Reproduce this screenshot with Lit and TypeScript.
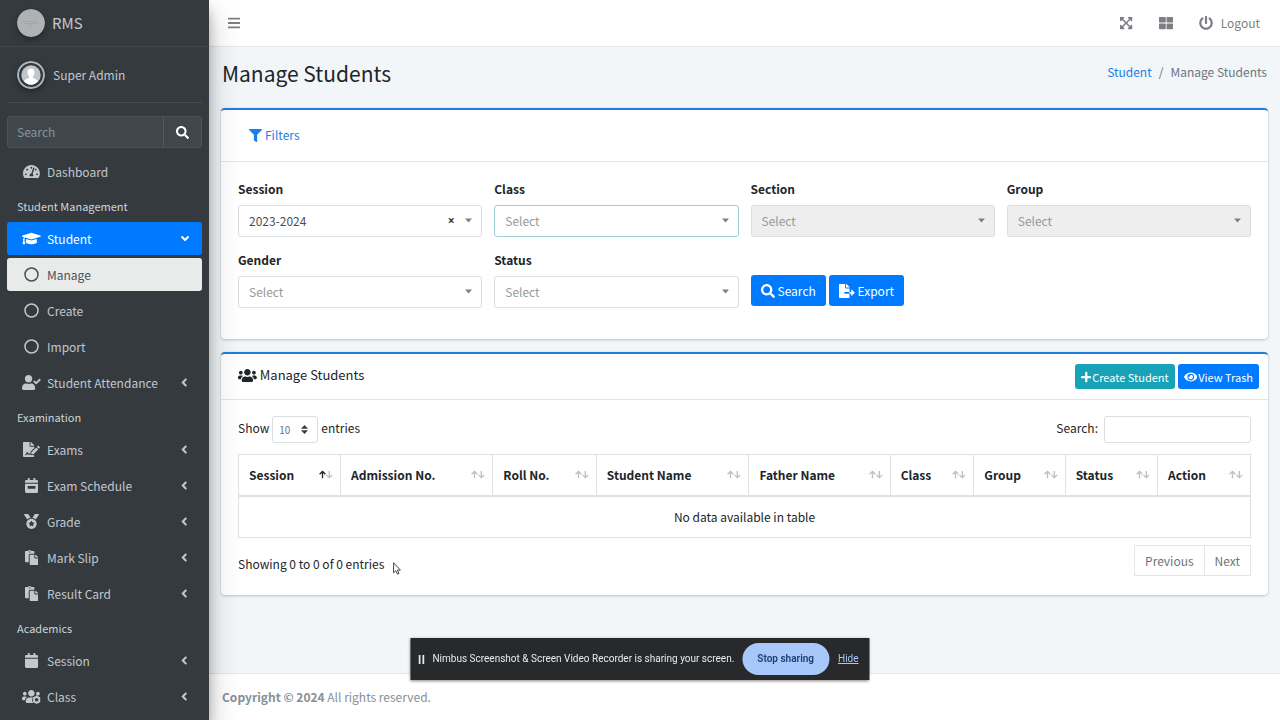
import { LitElement, html, css, svg, nothing } from "lit";
import { customElement, property } from "lit/decorators.js";

interface Glyph {
  w: number;
  body: unknown;
}

const path = (w: number, d: string): Glyph => ({ w, body: svg`<path fill="currentColor" fill-rule="evenodd" d=${d}></path>` });

const CALENDAR =
  "M12 192h424c6.6 0 12 5.4 12 12v260c0 26.5-21.5 48-48 48H48c-26.5 0-48-21.5-48-48V204c0-6.6 5.4-12 12-12zm436-44v-36c0-26.5-21.5-48-48-48h-48V12c0-6.6-5.4-12-12-12h-40c-6.6 0-12 5.4-12 12v52H160V12c0-6.6-5.4-12-12-12h-40c-6.6 0-12 5.4-12 12v52H48C21.5 64 0 85.5 0 112v36c0 6.6 5.4 12 12 12h424c6.6 0 12-5.4 12-12z";

const GLYPHS: Record<string, Glyph> = {
  search: path(512, "M505 442.7L405.3 343c-4.5-4.5-10.6-7-17-7H372c27.6-35.3 44-79.7 44-128C416 93.1 322.9 0 208 0S0 93.1 0 208s93.1 208 208 208c48.3 0 92.7-16.4 128-44v16.3c0 6.4 2.5 12.5 7 17l99.7 99.7c9.4 9.4 24.6 9.4 33.9 0l28.3-28.3c9.4-9.4 9.4-24.6.1-34zM208 336c-70.7 0-128-57.2-128-128 0-70.7 57.2-128 128-128 70.7 0 128 57.2 128 128 0 70.7-57.2 128-128 128z"),
  gauge: path(576, "M288 32C128.94 32 0 160.94 0 320c0 52.8 14.25 102.26 39.06 144.8 5.61 9.62 16.3 15.2 27.44 15.2h443c11.14 0 21.83-5.58 27.44-15.2C561.75 422.26 576 372.8 576 320c0-159.06-128.94-288-288-288zm0 64c14.71 0 26.58 10.13 30.32 23.65-1.11 2.26-2.64 4.23-3.45 6.67l-9.22 27.67c-5.13 3.49-10.97 6.01-17.64 6.01-17.67 0-32-14.33-32-32S270.33 96 288 96zM96 384c-17.67 0-32-14.33-32-32s14.33-32 32-32 32 14.33 32 32-14.33 32-32 32zm48-160c-17.67 0-32-14.33-32-32s14.33-32 32-32 32 14.33 32 32-14.33 32-32 32zm246.77-72.41l-61.33 184C343.13 347.33 352 364.54 352 384c0 11.72-3.38 22.55-8.88 32H232.88c-5.5-9.45-8.88-20.28-8.88-32 0-33.94 26.5-61.43 59.9-63.59l61.34-184.01c4.17-12.56 17.73-19.45 30.36-15.17 12.57 4.19 19.35 17.79 15.17 30.36zm14.66 57.2l15.52-46.55c3.47-1.29 7.13-2.23 11.05-2.23 17.67 0 32 14.33 32 32s-14.33 32-32 32c-11.38-.01-20.89-6.28-26.57-15.22zM480 384c-17.67 0-32-14.33-32-32s14.33-32 32-32 32 14.33 32 32-14.33 32-32 32z"),
  cap: path(640, "M622.34 153.2L343.4 67.5c-15.2-4.67-31.6-4.67-46.79 0L17.66 153.2c-23.54 7.23-23.54 38.36 0 45.59l48.63 14.94c-10.67 13.19-17.23 29.28-17.88 46.9C38.78 266.15 32 276.11 32 288c0 10.78 5.68 19.85 13.86 25.65L20.33 428.53C18.11 438.52 25.71 448 35.94 448h56.11c10.24 0 17.84-9.48 15.62-19.47L82.14 313.65C90.32 307.85 96 298.78 96 288c0-11.57-6.47-21.25-15.66-26.87.76-15.02 8.44-28.3 20.69-36.72L296.6 284.5c9.06 2.78 26.44 6.25 46.79 0l278.95-85.7c23.55-7.24 23.55-38.36 0-45.6zM352.79 315.09c-28.53 8.76-52.84 3.92-65.59 0l-145.02-44.55L128 384c0 35.35 85.96 64 192 64s192-28.65 192-64l-14.18-113.47-145.03 44.56z"),
  circle: { w: 512, body: svg`<circle cx="256" cy="256" r="222" fill="none" stroke="currentColor" stroke-width="52"></circle>` },
  userCheck: path(640, "M224 256c70.7 0 128-57.3 128-128S294.7 0 224 0 96 57.3 96 128s57.3 128 128 128zm89.6 32h-16.7c-22.2 10.2-46.9 16-72.9 16s-50.6-5.8-72.9-16h-16.7C60.2 288 0 348.2 0 422.4V464c0 26.5 21.5 48 48 48h352c26.5 0 48-21.5 48-48v-41.6c0-74.2-60.2-134.4-134.4-134.4zM636.6 159.6l-28.4-28.6c-4.7-4.8-12.4-4.8-17.1-.1L484 237.1l-46.4-46.8c-4.7-4.7-12.4-4.8-17.1-.1l-28.7 28.4c-4.7 4.7-4.8 12.4-.1 17.1l83.4 84.1c4.7 4.7 12.4 4.8 17.1.1l144.2-143.1c4.8-4.8 4.9-12.5.2-17.2z"),
  signature: path(576, "M218.17 424.14c-2.95-5.92-8.09-6.52-10.17-6.52s-7.22.59-10.02 6.19l-7.67 15.34c-6.37 12.78-25.03 11.37-29.48-2.09L144 386.59l-10.61 31.88c-5.89 17.66-22.38 29.53-41 29.53H80c-8.84 0-16-7.16-16-16s7.16-16 16-16h12.39c4.83 0 9.11-3.08 10.64-7.66l18.19-54.64c3.3-9.81 12.44-16.41 22.78-16.41s19.48 6.59 22.77 16.41l13.88 41.64c19.75-16.19 54.06-9.7 66 14.16 1.89 3.78 5.49 5.95 9.36 6.26v-82.12l128-127.09V160H248c-13.2 0-24-10.8-24-24V0H24C10.7 0 0 10.7 0 24v464c0 13.3 10.7 24 24 24h336c13.3 0 24-10.7 24-24v-40l-128-.11c-16.12-.31-30.58-9.28-37.83-23.75zM384 121.9c0-6.3-2.5-12.4-7-16.9L279.1 7c-4.5-4.5-10.6-7-17-7H256v128h128v-6.1zm-96 225.06V416h68.99l161.68-162.78-67.88-67.88L288 346.96zm280.54-179.63l-31.87-31.87c-9.94-9.94-26.07-9.94-36.01 0l-27.25 27.25 67.88 67.88 27.25-27.25c9.95-9.94 9.95-26.07 0-36.01z"),
  calendar: path(448, CALENDAR),
  calendarMinus: path(448, CALENDAR + "M92 284v68c0 8 5 12 12 12h240c7 0 12-4 12-12v-68c0-8-5-12-12-12H104c-7 0-12 4-12 12z"),
  medal: path(512, "M223.75 130.75L154.62 15.54A31.997 31.997 0 0 0 127.18 0H16.03C3.08 0-4.5 14.57 2.92 25.18l111.27 158.96c29.72-27.77 67.52-46.83 109.56-53.39zM495.97 0H384.82c-11.24 0-21.66 5.9-27.44 15.54l-69.13 115.21c42.04 6.56 79.84 25.62 109.56 53.38L509.08 25.18C516.5 14.57 508.92 0 495.97 0zM256 160c-97.2 0-176 78.8-176 176s78.8 176 176 176 176-78.8 176-176-78.8-176-176-176zm92.52 157.26l-37.93 36.96 8.97 52.22c1.6 9.36-8.26 16.51-16.65 12.09L256 393.88l-46.9 24.65c-8.4 4.45-18.25-2.74-16.65-12.09l8.97-52.22-37.93-36.96c-6.82-6.64-3.05-18.23 6.35-19.59l52.43-7.64 23.43-47.52c2.11-4.28 6.19-6.39 10.28-6.39 4.11 0 8.22 2.14 10.33 6.39l23.43 47.52 52.43 7.64c9.4 1.36 13.17 12.95 6.35 19.59z"),
  paste: path(448, "M128 184c0-30.879 25.122-56 56-56h136V56c0-13.255-10.745-24-24-24h-80.61C204.306 12.89 183.637 0 160 0s-44.306 12.89-55.39 32H24C10.745 32 0 42.745 0 56v336c0 13.255 10.745 24 24 24h104V184zm32-144c13.255 0 24 10.745 24 24s-10.745 24-24 24-24-10.745-24-24 10.745-24 24-24zm184 248h104v200c0 13.255-10.745 24-24 24H184c-13.255 0-24-10.745-24-24V184c0-13.255 10.745-24 24-24h136v104c0 13.2 10.8 24 24 24zm104-38.059V256h-96v-96h6.059a24 24 0 0 1 16.97 7.029l65.941 65.941a24.002 24.002 0 0 1 7.03 16.971z"),
  users: path(640, "M96 224c35.3 0 64-28.7 64-64s-28.7-64-64-64-64 28.7-64 64 28.7 64 64 64zm448 0c35.3 0 64-28.7 64-64s-28.7-64-64-64-64 28.7-64 64 28.7 64 64 64zm32 32h-64c-17.6 0-33.5 7.1-45.1 18.6 40.3 22.1 68.9 62 75.1 109.4h66c17.7 0 32-14.3 32-32v-32c0-35.3-28.7-64-64-64zm-256 0c61.9 0 112-50.1 112-112S381.9 32 320 32 208 82.1 208 144s50.1 112 112 112zm76.8 32h-8.3c-20.8 10-43.9 16-68.5 16s-47.6-6-68.5-16h-8.3C179.6 288 128 339.6 128 403.2V432c0 26.5 21.5 48 48 48h288c26.5 0 48-21.5 48-48v-28.8c0-63.6-51.6-115.2-115.2-115.2zm-223.7-13.4C161.5 263.1 145.6 256 128 256H64c-35.3 0-64 28.7-64 64v32c0 17.7 14.3 32 32 32h65.9c6.3-47.4 34.9-87.3 75.2-109.4z"),
  usersCog: {
    w: 640,
    body: svg`<path fill="currentColor" d="M96 224c35.3 0 64-28.7 64-64s-28.7-64-64-64-64 28.7-64 64 28.7 64 64 64zm224 32c61.9 0 112-50.1 112-112S381.9 32 320 32 208 82.1 208 144s50.1 112 112 112zm224-32c35.3 0 64-28.7 64-64s-28.7-64-64-64-64 28.7-64 64 28.7 64 64 64zM173.1 274.6C161.5 263.1 145.6 256 128 256H64c-35.3 0-64 28.7-64 64v32c0 17.7 14.3 32 32 32h65.9c6.3-47.4 34.9-87.3 75.2-109.4zM243 288C180 288 128 340 128 403v29c0 26 22 48 48 48h210c-45-50-50-135-15-192z"></path>
      <circle cx="500" cy="365" r="92" fill="none" stroke="currentColor" stroke-width="62"></circle>
      <path fill="none" stroke="currentColor" stroke-width="52" d="M500 225v60M500 445v60M379 295l52 30M569 405l52 30M379 435l52-30M569 325l52-30"></path>`,
  },
  angle: path(320, "M31.7 239l136-136c9.4-9.4 24.6-9.4 33.9 0l22.6 22.6c9.4 9.4 9.4 24.6 0 33.9L127.9 256l96.4 96.4c9.4 9.4 9.4 24.6 0 33.9L201.7 409c-9.4 9.4-24.6 9.4-33.9 0l-136-136c-9.5-9.4-9.5-24.6-.1-34z"),
  angleDown: path(320, "M143 352.3L7 216.3c-9.4-9.4-9.4-24.6 0-33.9l22.6-22.6c9.4-9.4 24.6-9.4 33.9 0l96.4 96.4 96.4-96.4c9.4-9.4 24.6-9.4 33.9 0l22.6 22.6c9.4 9.4 9.4 24.6 0 33.9l-136 136c-9.2 9.4-24.4 9.4-33.8 0z"),
  bars: path(448, "M16 132h416c8.8 0 16-7.2 16-16V76c0-8.8-7.2-16-16-16H16C7.2 60 0 67.2 0 76v40c0 8.8 7.2 16 16 16zm0 160h416c8.8 0 16-7.2 16-16v-40c0-8.8-7.2-16-16-16H16c-8.8 0-16 7.2-16 16v40c0 8.8 7.2 16 16 16zm0 160h416c8.8 0 16-7.2 16-16v-40c0-8.8-7.2-16-16-16H16c-8.8 0-16 7.2-16 16v40c0 8.8 7.2 16 16 16z"),
  expand: path(448, "M448 344v112a23.94 23.94 0 0 1-24 24H312c-21.39 0-32.09-25.9-17-41l36.2-36.2L224 295.6 116.77 402.9 153 439c15.09 15.1 4.39 41-17 41H24a23.94 23.94 0 0 1-24-24V344c0-21.4 25.89-32.1 41-17l36.19 36.2L184.46 256 77.18 148.7 41 185c-15.1 15.1-41 4.4-41-17V56a23.94 23.94 0 0 1 24-24h112c21.39 0 32.09 25.9 17 41l-36.2 36.2L224 216.4l107.23-107.3L295 73c-15.09-15.1-4.39-41 17-41h112a23.94 23.94 0 0 1 24 24v112c0 21.4-25.89 32.1-41 17l-36.19-36.2L263.54 256l107.28 107.3L407 327.1c15.1-15.2 41-4.5 41 16.9z"),
  grid: path(512, "M24 32h200c13 0 24 11 24 24v160c0 13-11 24-24 24H24c-13 0-24-11-24-24V56c0-13 11-24 24-24zM300 32h188c13 0 24 11 24 24v160c0 13-11 24-24 24H300c-13 0-24-11-24-24V56c0-13 11-24 24-24zM24 272h200c13 0 24 11 24 24v160c0 13-11 24-24 24H24c-13 0-24-11-24-24V296c0-13 11-24 24-24zM300 272h188c13 0 24 11 24 24v160c0 13-11 24-24 24H300c-13 0-24-11-24-24V296c0-13 11-24 24-24z"),
  power: path(512, "M400 54.1c63 45 104 118.6 104 201.9 0 136.8-110.8 247.7-247.5 248C120 504.3 8.2 393 8 256.4 7.9 173.1 48.9 99.3 111.8 54.2c11.7-8.3 28-4.8 35 7.7L162.6 90c5.9 10.5 3.1 23.8-6.6 31-41.5 30.8-68 79.6-68 134.9-.1 92.3 74.5 168.1 168 168.1 91.6 0 168.6-74.2 168-169.1-.3-51.8-24.7-101.8-68.1-134-9.7-7.2-12.4-20.5-6.5-30.9l15.8-28.1c7-12.4 23.2-16.1 34.8-7.8zM296 264V24c0-13.3-10.7-24-24-24h-32c-13.3 0-24 10.7-24 24v240c0 13.3 10.7 24 24 24h32c13.3 0 24-10.7 24-24z"),
  filter: path(512, "M487.976 0H24.028C2.71 0-8.047 25.866 7.058 40.971L192 225.941V432c0 7.831 3.821 15.17 10.237 19.662l80 55.98C298.02 518.69 320 507.493 320 487.98V225.941l184.947-184.97C520.021 25.896 509.338 0 487.976 0z"),
  fileExport: path(576, "M384 121.9c0-6.3-2.5-12.4-7-16.9L279.1 7c-4.5-4.5-10.6-7-17-7H256v128h128zM571 308l-95.7-96.4c-10.1-10.1-27.4-3-27.4 11.3V288h-64v64h64v65.2c0 14.3 17.3 21.4 27.4 11.3L571 332c6.6-6.6 6.6-17.4 0-24zm-379 28v-32c0-8.8 7.2-16 16-16h176V160H248c-13.2 0-24-10.8-24-24V0H24C10.7 0 0 10.7 0 24v464c0 13.3 10.7 24 24 24h336c13.3 0 24-10.7 24-24V352H208c-8.8 0-16-7.2-16-16z"),
  plus: path(448, "M416 208H272V64c0-17.67-14.33-32-32-32h-32c-17.67 0-32 14.33-32 32v144H32c-17.67 0-32 14.33-32 32v32c0 17.67 14.33 32 32 32h144v144c0 17.67 14.33 32 32 32h32c17.67 0 32-14.33 32-32V304h144c17.67 0 32-14.33 32-32v-32c0-17.67-14.33-32-32-32z"),
  eye: path(576, "M572.52 241.4C518.29 135.59 410.93 64 288 64S57.68 135.64 3.48 241.41a32.35 32.35 0 0 0 0 29.19C57.71 376.41 165.07 448 288 448s230.32-71.64 284.52-177.41a32.35 32.35 0 0 0 0-29.19zM288 400a144 144 0 1 1 144-144 143.93 143.93 0 0 1-144 144zm0-240a95.31 95.31 0 0 0-25.31 3.79 47.85 47.85 0 0 1-66.9 66.9A95.78 95.78 0 1 0 288 160z"),
};

const icon = (name: string, cls = "") => {
  const g = GLYPHS[name];
  return html`<svg class="icon ${cls}" viewBox="0 0 ${g.w} 512" aria-hidden="true">${g.body}</svg>`;
};

const shared = css`
  * {
    box-sizing: border-box;
  }
  .icon {
    display: block;
    flex: none;
    height: 13px;
    width: auto;
  }
  a {
    color: inherit;
    text-decoration: none;
  }
  button,
  input,
  select {
    font: inherit;
    margin: 0;
  }
  button {
    cursor: pointer;
  }
  h1,
  h2,
  p {
    margin: 0;
    padding: 0;
    font-weight: 400;
  }
`;

interface NavEntry {
  label: string;
  glyph?: string;
  kind?: "header" | "open" | "current" | "leaf";
}

const NAV: NavEntry[] = [
  { label: "Dashboard", glyph: "gauge", kind: "leaf" },
  { label: "Student Management", kind: "header" },
  { label: "Student", glyph: "cap", kind: "open" },
  { label: "Manage", glyph: "circle", kind: "current" },
  { label: "Create", glyph: "circle", kind: "leaf" },
  { label: "Import", glyph: "circle", kind: "leaf" },
  { label: "Student Attendance", glyph: "userCheck" },
  { label: "Examination", kind: "header" },
  { label: "Exams", glyph: "signature" },
  { label: "Exam Schedule", glyph: "calendarMinus" },
  { label: "Grade", glyph: "medal" },
  { label: "Mark Slip", glyph: "paste" },
  { label: "Result Card", glyph: "paste" },
  { label: "Academics", kind: "header" },
  { label: "Session", glyph: "calendar" },
  { label: "Class", glyph: "usersCog" },
];

@customElement("app-sidebar")
export class AppSidebar extends LitElement {
  static styles = [
    shared,
    css`
      :host {
        display: block;
        flex: none;
        width: 209px;
        height: 100vh;
        position: sticky;
        top: 0;
        z-index: 2;
      }
      .panel {
        height: 100%;
        background: #343a3e;
        color: #c2c7d0;
        box-shadow: 0 14px 28px rgba(0, 0, 0, 0.25), 0 10px 10px rgba(0, 0, 0, 0.22);
        overflow: hidden;
      }
      .brand {
        display: flex;
        align-items: center;
        gap: 7px;
        height: 47px;
        padding: 0 17px 1px;
        border-bottom: 1px solid #42494d;
        font-size: 15px;
        line-height: 24px;
      }
      .logo {
        display: block;
        width: 28px;
        height: 28px;
        border-radius: 50%;
        box-shadow: 0 3px 6px rgba(0, 0, 0, 0.3);
      }
      .body {
        padding: 0 7px;
      }
      .user {
        display: flex;
        align-items: center;
        gap: 8px;
        height: 56px;
        padding: 0 10px;
        border-bottom: 1px solid #454c51;
      }
      .search {
        display: flex;
        height: 32px;
        margin: 13px 0 7px;
        border: 1px solid #4b5358;
        border-radius: 3px;
        background: #3f474c;
      }
      .search input {
        flex: 1;
        min-width: 0;
        padding: 0 9px;
        border: 0;
        outline: 0;
        background: none;
        color: #fff;
      }
      .search input::placeholder {
        color: #8b9299;
        opacity: 1;
      }
      .search button {
        display: grid;
        place-items: center;
        width: 38px;
        padding: 0;
        border: 0;
        border-left: 1px solid #545c61;
        background: none;
        color: #fff;
      }
      .header {
        height: 31px;
        padding: 0 10px;
        font-size: 11px;
        line-height: 31px;
        color: #d0d4db;
      }
      .link {
        display: flex;
        align-items: center;
        height: 33px;
        margin-bottom: 3px;
        padding: 0 13px 0 14px;
        border-radius: 3px;
      }
      .glyph {
        display: grid;
        place-items: center;
        width: 21px;
        margin-right: 5px;
      }
      .glyph .icon {
        height: 15px;
      }
      .label {
        flex: 1;
      }
      .open {
        background: #007bff;
        color: #fff;
      }
      .current {
        background: #e9ebeb;
        color: #4a5057;
      }
    `,
  ];

  render() {
    return html`<div class="panel">
      <a class="brand" href="#">
        <svg class="logo" viewBox="0 0 28 28" aria-hidden="true">
          <circle cx="14" cy="14" r="14" fill="#aeb2b5"></circle>
          <path d="M6 12.5h16M7 14.5h14M12 16.5h4" stroke="#a2a7aa" stroke-width="1"></path>
        </svg>
        <span>RMS</span>
      </a>
      <div class="body">
        <a class="user" href="#">
          <svg class="logo" viewBox="0 0 28 28" aria-hidden="true">
            <circle cx="14" cy="14" r="13" fill="#343a3e" stroke="#adb5bd" stroke-width="2"></circle>
            <circle cx="14" cy="14" r="9.7" fill="#c3c6c9"></circle>
            <path fill="#fff" d="M14 7.5c2.2 0 3.5 1.7 3.5 3.9 0 1.6-.7 2.9-1.5 3.7v1.4c0 1 3.8 1.4 5 3.8A9.7 9.7 0 0 1 14 23.7a9.7 9.7 0 0 1-7-3.4c1.2-2.4 5-2.8 5-3.8v-1.4c-.8-.8-1.5-2.1-1.5-3.7 0-2.2 1.3-3.9 3.5-3.9z"></path>
          </svg>
          <span>Super Admin</span>
        </a>
        <form class="search" @submit=${(e: Event) => e.preventDefault()}>
          <input type="search" placeholder="Search" aria-label="Search menu" />
          <button type="submit" aria-label="Search">${icon("search")}</button>
        </form>
        <nav>
          ${NAV.map((n) =>
            n.kind === "header"
              ? html`<div class="header">${n.label}</div>`
              : html`<a class="link ${n.kind ?? ""}" href="#">
                  <span class="glyph">${icon(n.glyph!)}</span>
                  <span class="label">${n.label}</span>
                  ${n.kind === "leaf" || n.kind === "current" ? nothing : icon(n.kind === "open" ? "angleDown" : "angle")}
                </a>`
          )}
        </nav>
      </div>
    </div>`;
  }
}

@customElement("filter-select")
export class FilterSelect extends LitElement {
  @property() label = "";
  @property() value = "";
  @property({ type: Boolean }) disabled = false;
  @property({ type: Boolean }) active = false;

  static styles = [
    shared,
    css`
      :host {
        display: block;
        min-width: 0;
      }
      label {
        display: block;
        margin-bottom: 6px;
        font-weight: 700;
        line-height: 20px;
        color: #212529;
      }
      .box {
        position: relative;
      }
      select {
        display: block;
        width: 100%;
        height: 32px;
        padding: 0 10px;
        appearance: none;
        border: 1px solid #dadee1;
        border-radius: 3px;
        background: #fff;
        color: #999;
        opacity: 1;
      }
      .filled {
        color: #495057;
      }
      .active {
        border-color: #9fcfd6;
      }
      select:disabled {
        background: #eee;
      }
      .arrow {
        position: absolute;
        right: 10px;
        top: 13px;
        width: 7px;
        height: 5px;
        pointer-events: none;
      }
      .clear {
        position: absolute;
        right: 26px;
        top: 8px;
        width: 10px;
        height: 16px;
        padding: 0;
        border: 0;
        background: none;
        color: #343a40;
        font-size: 12px;
        font-family: "Open Sans", sans-serif;
        font-weight: 700;
        line-height: 16px;
      }
    `,
  ];

  render() {
    const cls = this.value ? "filled" : this.active ? "active" : "";
    return html`<label for="field">${this.label}</label>
      <div class="box">
        <select id="field" class=${cls} ?disabled=${this.disabled}>
          <option>${this.value || "Select"}</option>
        </select>
        ${this.value ? html`<button class="clear" type="button" aria-label="Clear">×</button>` : nothing}
        <svg class="arrow" viewBox="0 0 7 5" aria-hidden="true"><path d="M0 .5h7L3.5 4.5z" fill="#808080"></path></svg>
      </div>`;
  }
}

const COLUMNS = ["Session", "Admission No.", "Roll No.", "Student Name", "Father Name", "Class", "Group", "Status", "Action"];

@customElement("app-root")
export class AppRoot extends LitElement {
  static styles = [
    shared,
    css`
      :host {
        display: flex;
        min-height: 100vh;
        background: #f2f6f8;
        color: #212529;
        font-family: "Noto Sans CJK SC", "Source Sans Pro", sans-serif;
        font-size: 12px;
        line-height: 20px;
      }
      .page {
        display: flex;
        flex: 1;
        flex-direction: column;
        min-width: 0;
      }
      .topbar {
        display: flex;
        align-items: center;
        height: 47px;
        padding: 0 20px 0 19px;
        border-bottom: 1px solid #e3e7ea;
        background: #fff;
        color: #7b7f83;
      }
      .tools {
        display: flex;
        align-items: center;
        gap: 26px;
        margin-left: auto;
      }
      .plain {
        padding: 0;
        border: 0;
        background: none;
        color: inherit;
      }
      .topbar .icon {
        height: 14px;
      }
      .logout {
        display: flex;
        align-items: center;
        gap: 8px;
      }
      .content {
        flex: 1;
        padding: 0 12px;
      }
      .heading {
        display: flex;
        justify-content: space-between;
        padding: 10px 1px 19px;
      }
      h1 {
        font-size: 21px;
        line-height: 32px;
      }
      .crumbs {
        display: flex;
        gap: 7px;
        padding-top: 5px;
        color: #6c757d;
      }
      .crumbs a,
      .filters {
        color: #1a7ee6;
      }
      .card {
        margin-bottom: 13px;
        border-top: 2px solid #1f7fd8;
        border-radius: 4px;
        background: #fff;
        box-shadow: 0 0 1px rgba(0, 0, 0, 0.125), 0 1px 3px rgba(0, 0, 0, 0.2);
      }
      .card-head {
        display: flex;
        justify-content: space-between;
        border-bottom: 1px solid #e3e6e9;
      }
      .filters {
        display: flex;
        align-items: center;
        gap: 3px;
        height: 51px;
        padding: 0 28px 1px;
      }
      .form {
        display: grid;
        grid-template-columns: repeat(4, 1fr);
        gap: 13px 12px;
        padding: 17px 17px 31px;
      }
      .actions {
        display: flex;
        align-items: flex-end;
        gap: 3px;
        padding-bottom: 2px;
      }
      .btn {
        display: flex;
        align-items: center;
        gap: 3px;
        height: 31px;
        padding: 0 10px;
        border: 0;
        border-radius: 3px;
        background: #007bff;
        color: #fff;
      }
      .btn .icon {
        height: 14px;
      }
      .list-head {
        height: 46px;
        padding: 10px 9px 0 17px;
      }
      .left,
      .right {
        display: flex;
        gap: 3px;
      }
      .left {
        align-items: center;
        height: 22px;
      }
      h2 {
        font-size: 13px;
        line-height: 20px;
      }
      .left .icon {
        height: 15px;
      }
      .small {
        gap: 1px;
        height: 25px;
        padding: 0 6px;
        font-size: 11px;
      }
      .small .icon {
        height: 12px;
      }
      .info {
        background: #17a2b8;
      }
      .list {
        padding: 16px 17px 19px;
      }
      .row {
        display: flex;
        justify-content: space-between;
      }
      .control {
        display: flex;
        gap: 3px;
        height: 27px;
        line-height: 24px;
      }
      .length {
        position: relative;
      }
      .length select {
        display: block;
        width: 46px;
        height: 27px;
        padding: 0 6px;
        appearance: none;
        border: 1px solid #dadee1;
        border-radius: 3px;
        background: #fff;
        color: #6c757d;
        font-size: 10px;
      }
      .length svg {
        position: absolute;
        right: 10px;
        top: 9px;
        width: 7px;
        height: 9px;
        pointer-events: none;
      }
      .find {
        gap: 6px;
      }
      .find input {
        width: 147px;
        height: 27px;
        padding: 0 7px;
        border: 1px solid #dadee1;
        border-radius: 3px;
        background: #fff;
      }
      table {
        width: 100%;
        margin: 11px 0 7px;
        border: 1px solid #dee2e6;
        border-spacing: 0;
      }
      th {
        height: 42px;
        padding: 0 7px 0 10px;
        border-bottom: 2px solid #dee2e6;
        border-left: 1px solid #dee2e6;
        font-weight: 700;
        text-align: left;
        white-space: nowrap;
      }
      th:first-child {
        border-left: 0;
      }
      .sort {
        display: flex;
        align-items: center;
        justify-content: space-between;
        gap: 3px;
      }
      .sort svg {
        flex: none;
        width: 14px;
        height: 10px;
      }
      td {
        height: 40px;
        padding: 0;
        text-align: center;
      }
      .pager {
        display: flex;
        border: 1px solid #e3e6e9;
      }
      .pager button {
        height: 29px;
        padding: 0 10px;
        border: 0;
        background: #fff;
        color: #6c757d;
      }
      .pager button + button {
        border-left: 1px solid #e3e6e9;
      }
      .status {
        padding-top: 9px;
      }
      footer {
        height: 47px;
        padding: 0 13px;
        border-top: 1px solid #e3e7ea;
        background: #fff;
        color: #869099;
        line-height: 46px;
      }
      .share {
        position: fixed;
        left: 50%;
        bottom: 40px;
        z-index: 3;
        display: flex;
        align-items: center;
        height: 42px;
        padding: 0 11px 0 8px;
        transform: translateX(-50%);
        background: #28292a;
        color: #e8eaed;
        box-shadow: 0 1px 3px rgba(0, 0, 0, 0.5);
        font-family: Roboto, "Open Sans", sans-serif;
        font-size: 10px;
        white-space: nowrap;
      }
      .pause {
        width: 6px;
        height: 9px;
        margin-right: 8px;
      }
      .stop {
        height: 32px;
        margin: 0 9px 0 8px;
        padding: 0 15px;
        border: 0;
        border-radius: 16px;
        background: #a8c7fa;
        color: #1b3f78;
        font-weight: 600;
      }
      .share a {
        color: #a8c7fa;
        text-decoration: underline;
      }
      .cursor {
        position: absolute;
        left: 393px;
        top: 562px;
        width: 8px;
        height: 13px;
      }
    `,
  ];

  private column(name: string, index: number) {
    const up = index === 0 ? "#212529" : "#bcbec0";
    return html`<th scope="col">
      <div class="sort">
        <span>${name}</span>
        <svg viewBox="0 0 14 10" fill="none" stroke-width="1.3" aria-hidden="true">
          <path stroke=${up} d="M3.5 8.2V1.5M.6 4.3l2.900-2.800 2.900 2.800"></path>
          <path stroke="#bcbec0" d="M10.3 1v6.700M7.400 4.900l2.900 2.800 2.900-2.800"></path>
        </svg>
      </div>
    </th>`;
  }

  render() {
    return html`<app-sidebar></app-sidebar>
      <div class="page">
        <header class="topbar">
          <button class="plain" aria-label="Toggle menu">${icon("bars")}</button>
          <div class="tools">
            <button class="plain" aria-label="Fullscreen">${icon("expand")}</button>
            <button class="plain" aria-label="Apps">${icon("grid")}</button>
            <a class="logout" href="#">${icon("power")}<span>Logout</span></a>
          </div>
        </header>
        <main class="content">
          <div class="heading">
            <h1>Manage Students</h1>
            <nav class="crumbs"><a href="#">Student</a><span>/</span><span>Manage Students</span></nav>
          </div>
          <section class="card">
            <div class="card-head"><a class="filters" href="#">${icon("filter")}<span>Filters</span></a></div>
            <form class="form" @submit=${(e: Event) => e.preventDefault()}>
              <filter-select label="Session" value="2023-2024"></filter-select>
              <filter-select label="Class" active></filter-select>
              <filter-select label="Section" disabled></filter-select>
              <filter-select label="Group" disabled></filter-select>
              <filter-select label="Gender"></filter-select>
              <filter-select label="Status"></filter-select>
              <div class="actions">
                <button class="btn" type="submit">${icon("search")}<span>Search</span></button>
                <button class="btn" type="button">${icon("fileExport")}<span>Export</span></button>
              </div>
            </form>
          </section>
          <section class="card">
            <div class="card-head list-head">
              <div class="left">${icon("users")}<h2>Manage Students</h2></div>
              <div class="right">
                <button class="btn small info">${icon("plus")}<span>Create Student</span></button>
                <button class="btn small">${icon("eye")}<span>View Trash</span></button>
              </div>
            </div>
            <div class="list">
              <div class="row">
                <div class="control">
                  <label for="length">Show</label>
                  <div class="length">
                    <select id="length">
                      <option>10</option>
                    </select>
                    <svg viewBox="0 0 7 9" aria-hidden="true"><path fill="#343a40" d="M0 3.8L3.5 0 7 3.800zM0 5.200h7L3.500 9z"></path></svg>
                  </div>
                  <span>entries</span>
                </div>
                <div class="control find">
                  <label for="find">Search:</label>
                  <input id="find" type="search" />
                </div>
              </div>
              <table>
                <thead>
                  <tr>
                    ${COLUMNS.map((c, i) => this.column(c, i))}
                  </tr>
                </thead>
                <tbody>
                  <tr>
                    <td colspan="9">No data available in table</td>
                  </tr>
                </tbody>
              </table>
              <div class="row">
                <p class="status">Showing 0 to 0 of 0 entries</p>
                <div class="pager"><button type="button">Previous</button><button type="button">Next</button></div>
              </div>
            </div>
          </section>
        </main>
        <footer><strong>Copyright © 2024</strong> All rights reserved.</footer>
      </div>
      <div class="share">
        <svg class="pause" viewBox="0 0 6 9" aria-hidden="true"><path fill="#e8eaed" d="M0 0h2v9H0zM4 0h2v9H4z"></path></svg>
        <span>Nimbus Screenshot &amp; Screen Video Recorder is sharing your screen.</span>
        <button class="stop" type="button">Stop sharing</button>
        <a href="#">Hide</a>
      </div>
      <svg class="cursor" viewBox="0 0 8 13" aria-hidden="true">
        <path d="M.6.8v10l2.300-2.100 1.600 3.500 1.500-.7-1.600-3.400h3z" fill="#fff" stroke="#333" stroke-width=".9"></path>
      </svg>`;
  }
}
